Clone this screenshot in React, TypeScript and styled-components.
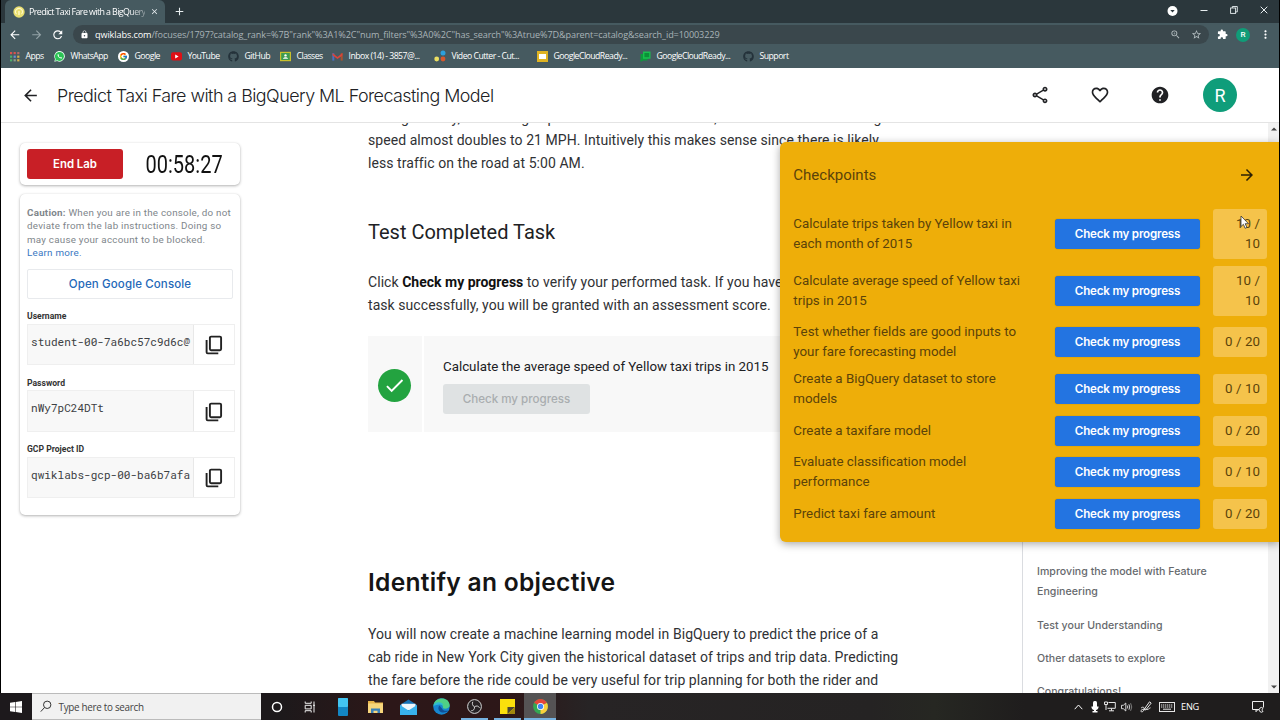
import React from "react";
import styled, { createGlobalStyle, css } from "styled-components";
import {
  MdArrowBack,
  MdArrowForward,
  MdRefresh,
  MdLock,
  MdZoomIn,
  MdStarBorder,
  MdExtension,
  MdMoreVert,
  MdOutlineShare,
  MdFavoriteBorder,
  MdHelp,
  MdClose,
  MdAdd,
  MdCheck,
} from "react-icons/md";
import { FaGithub } from "react-icons/fa";
import { FcGoogle } from "react-icons/fc";

const SEGOE = '"Open Sans", "Noto Sans", sans-serif';
const GOOGLE = 'Inter, "Open Sans", sans-serif';
const ROBOTO = 'Roboto, "Liberation Sans", sans-serif';

const Global = createGlobalStyle`
  * { box-sizing: border-box; }
  html, body { margin: 0; padding: 0; }
  body { width: 1280px; height: 720px; overflow: hidden; background: #fff; font-family: ${ROBOTO}; }
  svg { display: block; flex: none; }
`;

const Screen = styled.div`
  width: 1280px;
  height: 720px;
  display: flex;
  flex-direction: column;
  overflow: hidden;
  background: #fff;
`;

const Viewport = styled.div`
  position: relative;
  height: 693px;
  display: flex;
  flex-direction: column;
  border-left: 1px solid #000;
  border-right: 1px solid #000;
`;

/* ---------- browser chrome ---------- */

const TabStrip = styled.div`
  height: 23px;
  display: flex;
  align-items: stretch;
  background: #2b373c;
  color: #e8eef0;
`;

const Tab = styled.div`
  width: 160px;
  margin-left: 4px;
  padding: 0 6px 0 8px;
  display: flex;
  align-items: center;
  border-radius: 6px 6px 0 0;
  background: #465a60;
`;

const TabTitle = styled.span`
  width: 117px;
  margin-left: 4px;
  margin-right: 5px;
  overflow: hidden;
  white-space: nowrap;
  font: 400 8.9px/14px ${SEGOE};
  letter-spacing: -0.6px;
  color: #fff;
  mask-image: linear-gradient(90deg, #000 86%, rgba(0, 0, 0, 0.35));
`;

const NewTab = styled.div`
  display: flex;
  align-items: center;
  margin-left: 8px;
`;

const WindowControls = styled.div`
  margin-left: auto;
  display: flex;
  align-items: center;
  gap: 22px;
  padding: 0 11px 3px 0;
`;

const Toolbar = styled.div`
  height: 23px;
  display: flex;
  align-items: center;
  background: #465a60;
  color: #fff;
`;

const NavIcons = styled.div`
  width: 72px;
  padding-left: 7px;
  display: flex;
  gap: 8px;
`;

const AddressBar = styled.div`
  width: 1136px;
  height: 19px;
  display: flex;
  align-items: center;
  padding: 0 7px;
  border-radius: 10px;
  background: #3a474c;
`;

const Url = styled.span`
  margin-left: 6px;
  white-space: pre;
  font: 400 9.1px/16px ${SEGOE};
  letter-spacing: -0.1px;
  color: #a9b4b8;
`;

const UrlHost = styled.span`
  color: #fff;
`;

const AddressActions = styled.div`
  margin-left: auto;
  display: flex;
  gap: 10px;
  color: #b4bec1;
`;

const Extensions = styled.div`
  margin-left: 8px;
`;

const ProfileDot = styled.div`
  width: 14px;
  height: 14px;
  margin: 0 9px 0 8px;
  border-radius: 50%;
  background: #109c78;
  color: #fff;
  text-align: center;
  font: 500 8px/14px ${ROBOTO};
`;

const Bookmarks = styled.div`
  height: 22px;
  padding: 0 0 2px 8px;
  display: flex;
  align-items: center;
  background: #465a60;
`;

const Bookmark = styled.div<{ $w: number }>`
  flex: none;
  width: ${(p) => p.$w}px;
  display: flex;
  align-items: center;
  gap: 5.5px;
  white-space: nowrap;
  font: 400 8.7px/14px ${SEGOE};
  letter-spacing: -0.52px;
  color: #fff;
`;

/* ---------- page header ---------- */

const PageHeader = styled.header`
  height: 55px;
  flex: none;
  display: flex;
  align-items: center;
  padding: 0 42px 0 20px;
  border-bottom: 1px solid #e4e4e4;
  background: #fff;
  color: #202124;
`;

const PageTitle = styled.h1`
  margin: 0 auto 0 17px;
  padding-top: 1px;
  font: 350 17.9px/26px ${GOOGLE};
  letter-spacing: -0.54px;
  white-space: nowrap;
`;

const HeaderActions = styled.div`
  display: flex;
  align-items: center;
  gap: 40px;
`;

const Avatar = styled.div`
  width: 34px;
  height: 34px;
  margin-left: -7px;
  border-radius: 50%;
  background: #0f9d7a;
  color: #fff;
  text-align: center;
  font: 400 18px/35px ${ROBOTO};
`;

/* ---------- page body ---------- */

const Body = styled.div`
  height: 570px;
  display: flex;
  overflow: hidden;
`;

const Sidebar = styled.aside`
  width: 367px;
  flex: none;
  padding: 20px 0 0 19px;
  display: flex;
  flex-direction: column;
  gap: 9px;
`;

const cardLook = css`
  width: 220px;
  border-radius: 5px;
  background: #fff;
  box-shadow: 0 1px 3px rgba(0, 0, 0, 0.3), 0 0 1px rgba(0, 0, 0, 0.1);
`;

const TimerCard = styled.div`
  ${cardLook}
  height: 42px;
  display: flex;
  align-items: center;
  padding-left: 7px;
`;

const EndLab = styled.button`
  width: 96px;
  height: 30px;
  padding: 0;
  border: 0;
  border-radius: 3px;
  background: #c81f26;
  color: #fff;
  font: 600 11.4px/29px ${GOOGLE};
  letter-spacing: -0.02px;
`;

const ClockBox = styled.div`
  flex: 1;
  display: flex;
  justify-content: center;
  padding-left: 6px;
`;

const Clock = styled.span`
  font: 400 26.5px/30px ${ROBOTO};
  transform: scaleX(0.755);
  color: #111;
`;

const LabCard = styled.div`
  ${cardLook}
  height: 321px;
  padding: 12px 6px 0 7px;
`;

const Caution = styled.p`
  margin: 0;
  font: 400 9.8px/13.3px ${ROBOTO};
  letter-spacing: 0.24px;
  white-space: nowrap;
  color: #80868b;
  b { font-weight: 700; }
`;

const Learn = styled.span`
  color: #3a78c2;
`;

const OpenConsole = styled.button`
  display: block;
  width: 206px;
  height: 30px;
  margin-top: 10px;
  padding: 0;
  border: 1px solid #e8eaed;
  border-radius: 2px;
  background: #fff;
  color: #2468b8;
  font: 500 11.5px/29px ${GOOGLE};
  letter-spacing: 0.12px;
`;

const FieldLabel = styled.div<{ $first?: boolean }>`
  margin-top: ${(p) => (p.$first ? 10 : 10.5)}px;
  font: 700 8.6px/14px ${ROBOTO};
  color: #333;
`;

const Field = styled.div`
  height: 41.5px;
  width: 208px;
  display: flex;
  border: 1px solid #efefef;
  margin-top: 0.5px;
`;

const FieldValue = styled.div`
  width: 166px;
  padding-left: 3px;
  overflow: hidden;
  white-space: nowrap;
  background: #f8f8f8;
  border-right: 1px solid #e8e8e8;
  font: 400 11.05px/33px "Roboto Mono", "DejaVu Sans Mono", monospace;
  color: #3c4043;
`;

const FieldCopy = styled.div`
  flex: 1;
  display: flex;
  align-items: center;
  justify-content: center;
  padding-top: 2px;
`;

const Article = styled.main`
  width: 654px;
  flex: none;
  color: #202124;
`;

const Para = styled.p<{ $top: number }>`
  margin: ${(p) => p.$top}px 0 0;
  font: 400 14px/22.6px ${ROBOTO};
  letter-spacing: 0.06px;
  white-space: nowrap;
  color: #303134;
  b { font-weight: 700; color: #111; letter-spacing: 0; }
`;

const SubHeading = styled.h3`
  margin: 42.8px 0 0;
  font: 400 20px/30px ${ROBOTO};
  letter-spacing: 0;
  color: #202124;
`;

const Heading = styled.h2`
  margin: 134px 0 0;
  font: 600 24.6px/32px ${GOOGLE};
  letter-spacing: 0.27px;
  color: #151515;
`;

const TaskBox = styled.div`
  width: 540px;
  height: 96px;
  margin-top: 19.2px;
  display: flex;
  gap: 2px;
`;

const TaskStatus = styled.div`
  width: 54px;
  background: #f8f8f8;
  display: flex;
  align-items: center;
  justify-content: center;
  padding: 3px 1px 0 0;
`;

const StatusDisc = styled.div`
  width: 33px;
  height: 33px;
  border-radius: 50%;
  background: #23a340;
  color: #fff;
  display: flex;
  align-items: center;
  justify-content: center;
`;

const TaskMain = styled.div`
  flex: 1;
  padding: 20px 0 0 19px;
  background: #f8f8f8;
`;

const TaskText = styled.div`
  font: 400 13.33px/21px ${ROBOTO};
  letter-spacing: -0.01px;
  color: #202124;
`;

const CheckButton = styled.button<{ $muted?: boolean }>`
  display: block;
  padding: 0;
  border: 0;
  border-radius: 3px;
  font-family: ${GOOGLE};
  ${(p) =>
    p.$muted
      ? css`
          width: 147px;
          height: 30px;
          margin-top: 7px;
          background: #dfe2e3;
          color: #a9adaf;
          font-size: 11.6px;
          font-weight: 500;
          letter-spacing: 0;
        `
      : css`
          width: 145px;
          height: 30px;
          background: #2374e1;
          color: #fff;
          font-size: 11.6px;
          font-weight: 600;
          letter-spacing: -0.19px;
          box-shadow: 0 0 1px rgba(80, 70, 0, 0.6);
        `}
`;

const Toc = styled.nav`
  flex: 1;
  margin-top: 20px;
  padding: 419.4px 0 0 14px;
  border-left: 1px solid #dadce0;
  display: flex;
  flex-direction: column;
  gap: 13.3px;
  overflow: hidden;
`;

const TocItem = styled.div`
  flex: none;
  font: 500 10.6px/20px ${GOOGLE};
  letter-spacing: 0.02px;
  color: #66696d;
  white-space: nowrap;
`;

const Scrollbar = styled.div`
  width: 11px;
  flex: none;
  display: flex;
  flex-direction: column;
  justify-content: space-between;
  align-items: center;
  padding: 4px 0;
  background: #f1f1f1;
`;

/* ---------- floating checkpoints panel ---------- */

const Panel = styled.section`
  position: absolute;
  left: 779px;
  top: 142px;
  width: 499px;
  height: 400px;
  padding: 18px 12px 0 13.3px;
  border-radius: 6px 0 0 6px;
  background: #eeae09;
  box-shadow: 0 2px 8px rgba(0, 0, 0, 0.35);
  color: #5b430a;
`;

const PanelHead = styled.div`
  height: 30px;
  display: flex;
  align-items: center;
  justify-content: space-between;
  padding-right: 11px;
  margin-bottom: 19px;
  font: 400 15px/30px ${ROBOTO};
  svg { color: #2b2005; }
`;

const Rows = styled.div`
  display: flex;
  flex-direction: column;
  gap: 6.65px;
`;

const Row = styled.div`
  display: grid;
  grid-template-columns: 261.7px 158px 54px;
  align-items: center;
`;

const RowLabel = styled.div`
  font: 400 13.33px/20px ${ROBOTO};
  letter-spacing: -0.01px;
  white-space: pre-line;
`;

const Score = styled.div`
  padding: 5px 7px 5px 8px;
  border-radius: 3px;
  background: #f5c34b;
  text-align: right;
  font: 400 13.33px/20px ${ROBOTO};
  letter-spacing: 0.05px;
  white-space: pre-line;
`;

const Pointer = styled.div`
  position: absolute;
  left: 1239px;
  top: 215px;
`;

/* ---------- taskbar ---------- */

const Taskbar = styled.footer`
  height: 27px;
  display: flex;
  align-items: stretch;
  background: linear-gradient(90deg, #1d191b 0 22%, #2c1718 30%, #2d1718 40%, #272425 46%, #252323 68%, #262722 73%, #1f1d1d 80%);
  color: #fff;
`;

const StartButton = styled.div`
  width: 32px;
  display: flex;
  align-items: center;
  justify-content: center;
  background: #1d191c;
`;

const SearchBox = styled.div`
  width: 229px;
  margin-right: -1px;
  display: flex;
  align-items: center;
  gap: 6.5px;
  padding-left: 8px;
  border-top: 1px solid #bbb;
  border-bottom: 1px solid #bbb;
  background: #f1f1f1;
  font: 400 9.9px/16px ${SEGOE};
  letter-spacing: -0.3px;
  color: #444;
`;

const AppSlot = styled.div<{ $state?: "open" | "active" }>`
  width: 33px;
  display: flex;
  align-items: center;
  justify-content: center;
  ${(p) => p.$state && css`box-shadow: inset 0 -2px #76b2e0;`}
  ${(p) => p.$state === "open" && css`width: 27px; margin: 0 3px;`}
  ${(p) => p.$state === "active" && css`width: 32px; background: #555354;`}
`;

const Tray = styled.div`
  margin-left: auto;
  display: flex;
  align-items: center;
  padding-right: 15px;
  font: 400 9.2px/14px ${SEGOE};
  letter-spacing: -0.3px;
`;

const TrayItem = styled.div<{ $w: number }>`
  width: ${(p) => p.$w}px;
  display: flex;
  justify-content: center;
`;

/* ---------- drawings ---------- */

const CopyIcon = () => (
  <svg width="18" height="20" viewBox="0 0 18 20" fill="none" stroke="#222" strokeWidth="1.9">
    <rect x="4.9" y="1.6" width="11.2" height="13.6" rx="1.2" />
    <path d="M1.6 5v12.2q0 1.2 1.2 1.2H13.3" />
  </svg>
);

const QwiklabsFavicon = () => (
  <svg width="12" height="12" viewBox="0 0 12 12">
    <circle cx="6" cy="6" r="5.7" fill="#e9df70" />
    <path d="M3.5 8.2a3.4 3.4 0 1 1 5 0" fill="none" stroke="#fff8c8" strokeWidth="1.1" />
    <path d="M6 5v4" stroke="#fff8c8" strokeWidth="1.4" />
  </svg>
);

const AppsIcon = () => (
  <svg width="11" height="11" viewBox="0 0 11 11">
    {["#d9534f", "#d9534f", "#b06a6a", "#4caf6a", "#6d8fd6", "#d8b04a", "#4caf6a", "#8fa08a", "#d8b04a"].map((c, i) => (
      <rect key={i} x={1 + (i % 3) * 3.6} y={1 + Math.floor(i / 3) * 3.6} width="2.2" height="2.2" fill={c} />
    ))}
  </svg>
);

const WhatsAppIcon = () => (
  <svg width="11" height="11" viewBox="0 0 11 11">
    <path d="M.3 10.8 1 8A5.3 5.3 0 1 1 3.1 10z" fill="#e8fff0" />
    <path d="M1.2 9.9l.5-2A4.5 4.5 0 1 1 3.2 9.3z" fill="#2bc355" />
    <path d="M3.8 3.2c-.9 1 .9 4.1 3.4 4.3.8 0 1-.9.6-1.1l-.9-.4-.6.6c-.8-.3-1.4-.9-1.7-1.6l.4-.6-.4-1.1z" fill="#fff" />
  </svg>
);

const GoogleDisc = () => (
  <svg width="11" height="11" viewBox="0 0 11 11">
    <circle cx="5.5" cy="5.5" r="5.5" fill="#fff" />
    <g transform="translate(1.2 1.2)">
      <FcGoogle size={8.6} />
    </g>
  </svg>
);

const YouTubeIcon = () => (
  <svg width="11" height="11" viewBox="0 0 11 11">
    <rect x="0" y="1.2" width="11" height="8.4" rx="2" fill="#e00f14" />
    <path d="M4.2 3.4v4l3.4-2z" fill="#fff" />
  </svg>
);

const ClassesIcon = () => (
  <svg width="11" height="11" viewBox="0 0 11 11">
    <rect y=".8" width="11" height="9.4" fill="#c8c02c" />
    <rect x="1.2" y="2" width="8.6" height="7" fill="#3d9b50" />
    <circle cx="5.5" cy="4.4" r="1.2" fill="#fff" />
    <path d="M3 7.7c.2-2 4.8-2 5 0z" fill="#fff" />
  </svg>
);

const GmailIcon = () => (
  <svg width="11" height="11" viewBox="0 0 11 11">
    <path d="M.3 2.2h2v7.4h-2z" fill="#4b6fc0" />
    <path d="M8.7 2.2h2v7.4h-2z" fill="#a9512e" />
    <path d="M.6 2l4.9 4 4.9-4v2.4L5.5 8 .6 4.4z" fill="#d9443b" />
  </svg>
);

const DotsIcon = () => (
  <svg width="12" height="12" viewBox="0 0 12 12">
    <circle cx="9" cy="2.9" r="2.5" fill="#2ba0dc" />
    <circle cx="2.7" cy="9" r="2.4" fill="#ecdf62" />
    <circle cx="9" cy="9" r="2.4" fill="#d8582c" />
  </svg>
);

const SlidesIcon = () => (
  <svg width="11" height="11" viewBox="0 0 11 11">
    <rect width="11" height="11" fill="#dfb322" />
    <rect x="2" y="3" width="7" height="5" fill="#fff" />
  </svg>
);

const ChatIcon = () => (
  <svg width="11" height="11" viewBox="0 0 11 11">
    <path d="M.5 3h7v6.5H3L.5 11z" fill="#0d9a3c" />
    <path d="M3 .5h7.5v7.3H3z" fill="#19c04e" />
    <path d="M4.4 2h4.8v4.2H4.4z" fill="#0a9138" />
  </svg>
);

const RestoreIcon = () => (
  <svg width="8" height="8" viewBox="0 0 8 8" fill="none" stroke="#e8eef0" strokeWidth=".9">
    <rect x=".6" y="2" width="5" height="5.4" />
    <path d="M2.3 2V.5h5v5.4H5.6" />
  </svg>
);

const MinimizeIcon = () => (
  <svg width="8" height="8" viewBox="0 0 8 8" stroke="#e8eef0">
    <path d="M.5 4.5h7" />
  </svg>
);

const WindowCloseIcon = () => (
  <svg width="8" height="8" viewBox="0 0 8 8" stroke="#e8eef0">
    <path d="M.7.7l6.6 6.6M7.3.7L.7 7.3" />
  </svg>
);

const CaretDisc = () => (
  <svg width="11" height="12" viewBox="0 0 11 12">
    <circle cx="5.5" cy="7" r="5" fill="#fff" />
    <path d="M3.3 5.9h4.4L5.5 8.5z" fill="#2b373c" />
  </svg>
);

const WindowsLogo = () => (
  <svg width="12" height="12" viewBox="0 0 12 12" fill="#fff">
    <path d="M0 1.7l5.2-.7v4.7H0zM5.8.9L12 0v5.7H5.8zM0 6.3h5.2V11L0 10.3zM5.8 6.3H12V12l-6.2-.9z" />
  </svg>
);

const SearchGlyph = () => (
  <svg width="12" height="13" viewBox="0 0 12 13" fill="none" stroke="#333" strokeWidth="1">
    <circle cx="7.2" cy="4.8" r="3.7" />
    <path d="M4.5 7.5L.8 11.6" />
  </svg>
);

const CortanaRing = () => (
  <svg width="12" height="12" viewBox="0 0 12 12">
    <circle cx="6" cy="6" r="4.5" fill="none" stroke="#fff" strokeWidth="1.5" />
  </svg>
);

const TaskViewIcon = () => (
  <svg width="12" height="12" viewBox="0 0 12 12" fill="none" stroke="#eee" strokeWidth="1">
    <path d="M1.2.5v1.8h6V.5M1.2 11.5V9.7h6v1.8M1.2 4.3h6v3.6h-6zM10 .5v11M9 4.3h2" />
  </svg>
);

const PhoneIcon = () => (
  <svg width="10" height="18" viewBox="0 0 10 18">
    <rect width="10" height="18" rx="1" fill="#1386c4" />
    <rect width="10" height="9" rx="1" fill="#43c5f2" />
  </svg>
);

const FolderIcon = () => (
  <svg width="15" height="14" viewBox="0 0 15 14">
    <path d="M0 1h6l1 1.5h8V13H0z" fill="#e9b64a" />
    <rect x="0" y="3.5" width="15" height="9.5" fill="#f7d67c" />
    <path d="M3 13V8.5h9V13H9.5v-2.2h-4V13z" fill="#3b82b8" />
  </svg>
);

const MailIcon = () => (
  <svg width="17" height="16" viewBox="0 0 17 16">
    <path d="M0 6l8.5-5.5L17 6v10H0z" fill="#1672b5" />
    <path d="M1.5 4.8h14V11h-14z" fill="#eef6fb" />
    <path d="M0 6l8.5 5.5L17 6v10H0z" fill="#38b2ec" />
  </svg>
);

const EdgeIcon = () => (
  <svg width="17" height="17" viewBox="0 0 17 17">
    <circle cx="8.5" cy="8.5" r="8.3" fill="#1786cf" />
    <path d="M.4 7.8C1.5-1.6 15.8-2 16.7 7c.3 3.3-4.8 4.6-6.9 3.1 1.6-3.6-5.8-6.6-9.4-2.3z" fill="#4fcf86" />
    <path d="M.4 7.8C1.2 3.5 9 2.5 10.5 7.5 6 5 3.5 7.5.4 7.8z" fill="#2cb7d6" />
    <path d="M6.4 7.5c-3 4 1 8.5 6.8 6.6 1.2-.5 2-1.1 2.4-1.7-2.7 1-6 .3-6.6-2z" fill="#0f4f97" />
  </svg>
);

const ObsIcon = () => (
  <svg width="15" height="15" viewBox="0 0 15 15" fill="none" stroke="#d4d4d4" strokeWidth="1">
    <circle cx="7.5" cy="7.5" r="6.9" fill="#262224" />
    <path d="M7.5 7.8C5.5 7 4.8 4.5 5.8 2.8M7.5 7.8c1.8-1.5 4.2-.8 5 1M7.5 7.8c.4 2.3-1.3 4-3.3 4" />
  </svg>
);

const StickyIcon = () => (
  <svg width="15" height="15" viewBox="0 0 15 15">
    <rect width="15" height="15" fill="#fbe00c" />
    <path d="M7.5 15V8H15z" fill="#4d4730" />
    <path d="M7.5 15L15 8v7z" fill="#a0870e" />
  </svg>
);

const ChromeIcon = () => (
  <svg width="15" height="15" viewBox="0 0 15 15">
    <circle cx="7.5" cy="7.5" r="7.4" fill="#34a853" />
    <path d="M7.5 7.5L1.1 3.8A7.4 7.4 0 0 1 13.9 3.8z" fill="#e5453a" />
    <path d="M7.5 7.5L13.9 3.8A7.4 7.4 0 0 1 7.5 14.9z" fill="#fbd03c" />
    <circle cx="7.5" cy="7.5" r="3.5" fill="#fff" />
    <circle cx="7.5" cy="7.5" r="2.7" fill="#4285f4" />
  </svg>
);

const TrayCaret = () => (
  <svg width="9" height="6" viewBox="0 0 9 6" fill="none" stroke="#fff">
    <path d="M.7 5.2L4.5 1l3.8 4.2" />
  </svg>
);

const MicIcon = () => (
  <svg width="8" height="12" viewBox="0 0 8 12" fill="#fff">
    <rect x="2" y="0" width="4" height="7" rx="1.5" />
    <path d="M.4 5.5h7.2c0 2.2-1.2 3.3-2.6 3.6v1h1.5v1.3h-5v-1.3H3v-1C1.6 8.8.4 7.7.4 5.5z" />
  </svg>
);

const NetworkIcon = () => (
  <svg width="12" height="11" viewBox="0 0 12 11" fill="none" stroke="#e6e6e6" strokeWidth="1">
    <path d="M4.5 1.5h6.8v5.8H3.5M5 9.8h5M7.5 7.3v2.5M.5 1h3v2.5h-3zM2 3.5v5.5" />
  </svg>
);

const VolumeIcon = () => (
  <svg width="12" height="10" viewBox="0 0 12 10" fill="none" stroke="#e6e6e6" strokeWidth=".9">
    <path d="M.5 3.3h1.8L4.8 1v8L2.3 6.7H.5z" />
    <path d="M6.3 3.5q1 1.5 0 3M7.9 2.3q1.7 2.7 0 5.4" />
    <path d="M9.6 1.2q2.3 3.8 0 7.6" stroke="#888" />
  </svg>
);

const PenIcon = () => (
  <svg width="12" height="12" viewBox="0 0 12 12" fill="none" stroke="#e6e6e6" strokeWidth="1">
    <path d="M4 8.5L9.5.8l1.7 1.3L5.7 9zM1 7.2c1.5-1.8 4-1 3 1.5s-3 3-3 1.2 4.5-2 6-1.5 1.5-1 3.5-1.6" />
  </svg>
);

const KeyboardIcon = () => (
  <svg width="16" height="10" viewBox="0 0 16 10" fill="none" stroke="#e6e6e6" strokeWidth="1">
    <rect x=".5" y=".5" width="15" height="9" />
    <path d="M2 3h12M2 5h12" strokeDasharray="1.3 .7" />
    <path d="M4 7.2h8" />
  </svg>
);

const NotificationIcon = () => (
  <svg width="12" height="13" viewBox="0 0 12 13" fill="none" stroke="#eee" strokeWidth="1">
    <path d="M7 9.5H.5v-8h11v6" />
    <path d="M4 9.5v2.2l2-2.2" />
    <path d="M11 8.2A2.3 2.3 0 1 0 11 11.5 2 2 0 0 1 11 8.2z" />
  </svg>
);

/* ---------- data ---------- */

const bookmarks: { icon: React.ReactNode; label: string; w: number }[] = [
  { icon: <AppsIcon />, label: "Apps", w: 45 },
  { icon: <WhatsAppIcon />, label: "WhatsApp", w: 64 },
  { icon: <GoogleDisc />, label: "Google", w: 53 },
  { icon: <YouTubeIcon />, label: "YouTube", w: 57 },
  { icon: <FaGithub size={11} color="#24323a" />, label: "GitHub", w: 52 },
  { icon: <ClassesIcon />, label: "Classes", w: 52 },
  { icon: <GmailIcon />, label: "Inbox (14) - 3857@...", w: 102 },
  { icon: <DotsIcon />, label: "Video Cutter - Cut...", w: 103 },
  { icon: <SlidesIcon />, label: "GoogleCloudReady...", w: 103 },
  { icon: <ChatIcon />, label: "GoogleCloudReady...", w: 103 },
  { icon: <FaGithub size={11} color="#24323a" />, label: "Support", w: 60 },
];

const checkpoints = [
  { label: "Calculate trips taken by Yellow taxi in\neach month of 2015", score: "10 /\n10" },
  { label: "Calculate average speed of Yellow taxi\ntrips in 2015", score: "10 /\n10" },
  { label: "Test whether fields are good inputs to\nyour fare forecasting model", score: "0 / 20" },
  { label: "Create a BigQuery dataset to store\nmodels", score: "0 / 10" },
  { label: "Create a taxifare model", score: "0 / 20" },
  { label: "Evaluate classification model\nperformance", score: "0 / 10" },
  { label: "Predict taxi fare amount", score: "0 / 20" },
];

const credentials = [
  { label: "Username", value: "student-00-7a6bc57c9d6c@" },
  { label: "Password", value: "nWy7pC24DTt" },
  { label: "GCP Project ID", value: "qwiklabs-gcp-00-ba6b7afa" },
];

export default function App() {
  return (
    <Screen>
      <Global />
      <Viewport>
        <TabStrip>
          <Tab>
            <QwiklabsFavicon />
            <TabTitle>Predict Taxi Fare with a BigQuery</TabTitle>
            <MdClose size={9} />
          </Tab>
          <NewTab>
            <MdAdd size={13} />
          </NewTab>
          <WindowControls>
            <CaretDisc />
            <MinimizeIcon />
            <RestoreIcon />
            <WindowCloseIcon />
          </WindowControls>
        </TabStrip>

        <Toolbar>
          <NavIcons>
            <MdArrowBack size={13.5} />
            <MdArrowForward size={13.5} color="#93a2a6" />
            <MdRefresh size={13.5} />
          </NavIcons>
          <AddressBar>
            <MdLock size={9} />
            <Url>
              <UrlHost>qwiklabs.com</UrlHost>
              /focuses/1797?catalog_rank=%7B"rank"%3A1%2C"num_filters"%3A0%2C"has_search"%3Atrue%7D&amp;parent=catalog&amp;search_id=10003229
            </Url>
            <AddressActions>
              <MdZoomIn size={11} />
              <MdStarBorder size={11} />
            </AddressActions>
          </AddressBar>
          <Extensions>
            <MdExtension size={11} />
          </Extensions>
          <ProfileDot>R</ProfileDot>
          <MdMoreVert size={13} />
        </Toolbar>

        <Bookmarks>
          {bookmarks.map((b, i) => (
            <Bookmark key={i} $w={b.w}>
              {b.icon}
              {b.label}
            </Bookmark>
          ))}
        </Bookmarks>

        <PageHeader>
          <MdArrowBack size={19} />
          <PageTitle>Predict Taxi Fare with a BigQuery ML Forecasting Model</PageTitle>
          <HeaderActions>
            <MdOutlineShare size={20} />
            <MdFavoriteBorder size={20} />
            <MdHelp size={20} />
            <Avatar>R</Avatar>
          </HeaderActions>
        </PageHeader>

        <Body>
          <Sidebar>
            <TimerCard>
              <EndLab>End Lab</EndLab>
              <ClockBox>
                <Clock>00:58:27</Clock>
              </ClockBox>
            </TimerCard>
            <LabCard>
              <Caution>
                <b>Caution:</b> When you are in the console, do not
                <br />
                deviate from the lab instructions. Doing so
                <br />
                may cause your account to be blocked.
                <br />
                <Learn>Learn more.</Learn>
              </Caution>
              <OpenConsole>Open Google Console</OpenConsole>
              {credentials.map((c, i) => (
                <React.Fragment key={c.label}>
                  <FieldLabel $first={i === 0}>{c.label}</FieldLabel>
                  <Field>
                    <FieldValue>{c.value}</FieldValue>
                    <FieldCopy>
                      <CopyIcon />
                    </FieldCopy>
                  </Field>
                </React.Fragment>
              ))}
            </LabCard>
          </Sidebar>

          <Article>
            <Para $top={-16.4}>
              During the day, the average speed is around 11-12 MPH; but at 5:00 AM the average
              <br />
              speed almost doubles to 21 MPH. Intuitively this makes sense since there is likely
              <br />
              less traffic on the road at 5:00 AM.
            </Para>
            <SubHeading>Test Completed Task</SubHeading>
            <Para $top={24.3}>
              Click <b>Check my progress</b> to verify your performed task. If you have
              <br />
              task successfully, you will be granted with an assessment score.
            </Para>
            <TaskBox>
              <TaskStatus>
                <StatusDisc>
                  <MdCheck size={23} />
                </StatusDisc>
              </TaskStatus>
              <TaskMain>
                <TaskText>Calculate the average speed of Yellow taxi trips in 2015</TaskText>
                <CheckButton $muted>Check my progress</CheckButton>
              </TaskMain>
            </TaskBox>
            <Heading>Identify an objective</Heading>
            <Para $top={25.6}>
              You will now create a machine learning model in BigQuery to predict the price of a
              <br />
              cab ride in New York City given the historical dataset of trips and trip data. Predicting
              <br />
              the fare before the ride could be very useful for trip planning for both the rider and
            </Para>
          </Article>

          <Toc>
            <TocItem>
              Improving the model with Feature
              <br />
              Engineering
            </TocItem>
            <TocItem>Test your Understanding</TocItem>
            <TocItem>Other datasets to explore</TocItem>
            <TocItem>Congratulations!</TocItem>
          </Toc>

          <Scrollbar>
            <svg width="6" height="4" viewBox="0 0 6 4">
              <path d="M0 3.5L3 .5l3 3z" fill="#444" />
            </svg>
            <svg width="6" height="4" viewBox="0 0 6 4">
              <path d="M0 .5l3 3 3-3z" fill="#444" />
            </svg>
          </Scrollbar>
        </Body>

        <Panel>
          <PanelHead>
            Checkpoints
            <MdArrowForward size={18} />
          </PanelHead>
          <Rows>
            {checkpoints.map((c) => (
              <Row key={c.label}>
                <RowLabel>{c.label}</RowLabel>
                <CheckButton>Check my progress</CheckButton>
                <Score>{c.score}</Score>
              </Row>
            ))}
          </Rows>
        </Panel>

        <Pointer>
          <svg width="10" height="15" viewBox="0 0 10 15">
            <path d="M1 1v10.5l2.4-2.2 1.7 4 1.8-.8-1.7-3.8h3.3z" fill="#fff" stroke="#333" strokeWidth=".8" />
          </svg>
        </Pointer>
      </Viewport>

      <Taskbar>
        <StartButton>
          <WindowsLogo />
        </StartButton>
        <SearchBox>
          <SearchGlyph />
          Type here to search
        </SearchBox>
        <AppSlot><CortanaRing /></AppSlot>
        <AppSlot><TaskViewIcon /></AppSlot>
        <AppSlot><PhoneIcon /></AppSlot>
        <AppSlot><FolderIcon /></AppSlot>
        <AppSlot><MailIcon /></AppSlot>
        <AppSlot><EdgeIcon /></AppSlot>
        <AppSlot $state="open"><ObsIcon /></AppSlot>
        <AppSlot $state="open"><StickyIcon /></AppSlot>
        <AppSlot $state="active"><ChromeIcon /></AppSlot>
        <Tray>
          <TrayItem $w={17}><TrayCaret /></TrayItem>
          <TrayItem $w={15}><MicIcon /></TrayItem>
          <TrayItem $w={16}><NetworkIcon /></TrayItem>
          <TrayItem $w={18}><VolumeIcon /></TrayItem>
          <TrayItem $w={20}><PenIcon /></TrayItem>
          <TrayItem $w={22}><KeyboardIcon /></TrayItem>
          <TrayItem $w={24}>ENG</TrayItem>
          <TrayItem $w={49} />
          <TrayItem $w={14}><NotificationIcon /></TrayItem>
        </Tray>
      </Taskbar>
    </Screen>
  );
}
